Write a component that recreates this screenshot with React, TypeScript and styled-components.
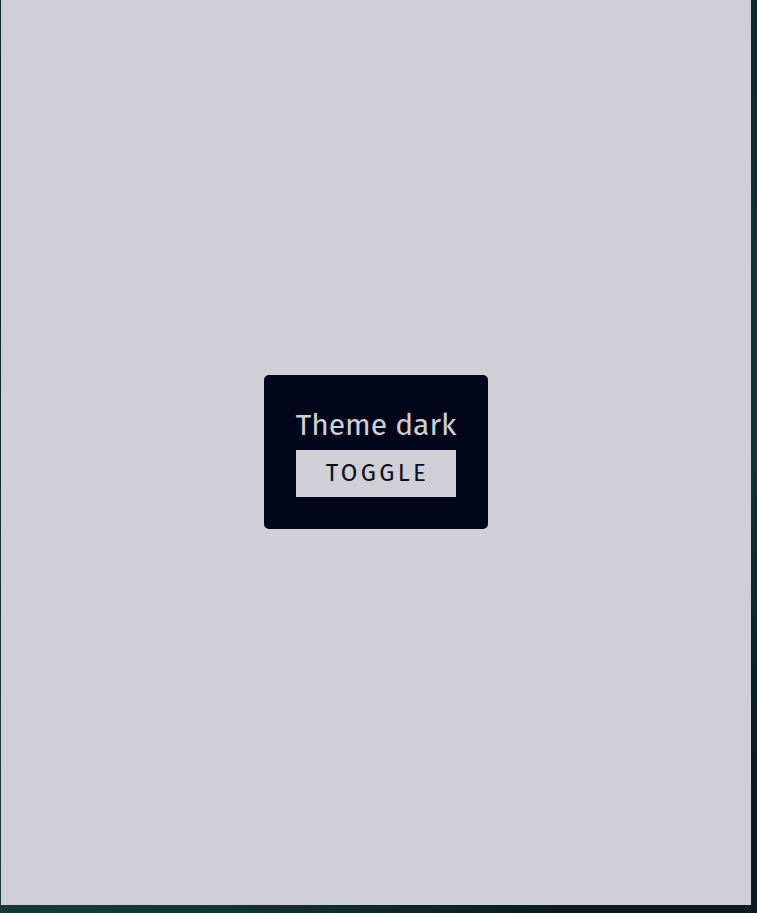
import styled, { createGlobalStyle } from 'styled-components';
import { useState } from 'react';

const GlobalStyle = createGlobalStyle`
  html, body {
    margin: 0;
    padding: 0;
    height: 100%;
  }
  body {
    background:
      radial-gradient(ellipse at 90% 40%, #123a36 0%, transparent 45%),
      radial-gradient(ellipse at 10% 90%, #17403a 0%, transparent 50%),
      linear-gradient(180deg, #0d2a28 0%, #0a1c1d 100%);
    font-family: 'Fira Sans', 'Noto Sans', 'Open Sans', sans-serif;
  }
`;

const Screen = styled.div`
  width: 750px;
  height: 905px;
  margin-left: 1px;
  padding-bottom: 2px;
  background: #d0cfd5;
  display: flex;
  align-items: center;
  justify-content: center;
  box-sizing: border-box;
`;

const Card = styled.div`
  background: #02061a;
  border-radius: 5px;
  padding: 30px 32px 32px;
  display: flex;
  flex-direction: column;
  align-items: stretch;
  gap: 5px;
`;

const Title = styled.div`
  color: #d0cfd5;
  font-size: 30px;
  line-height: 40px;
  text-align: center;
  white-space: nowrap;
`;

const ToggleButton = styled.button`
  height: 47px;
  border: none;
  background: #d0cfd5;
  color: #0a0d22;
  font-family: inherit;
  font-size: 24px;
  font-weight: 400;
  letter-spacing: 3.4px;
  padding: 0 0 0 3px;
  cursor: pointer;
`;

export default function App() {
  const [dark, setDark] = useState(true);
  return (
    <>
      <GlobalStyle />
      <Screen>
        <Card>
          <Title>Theme {dark ? 'dark' : 'light'}</Title>
          <ToggleButton onClick={() => setDark(!dark)}>TOGGLE</ToggleButton>
        </Card>
      </Screen>
    </>
  );
}
